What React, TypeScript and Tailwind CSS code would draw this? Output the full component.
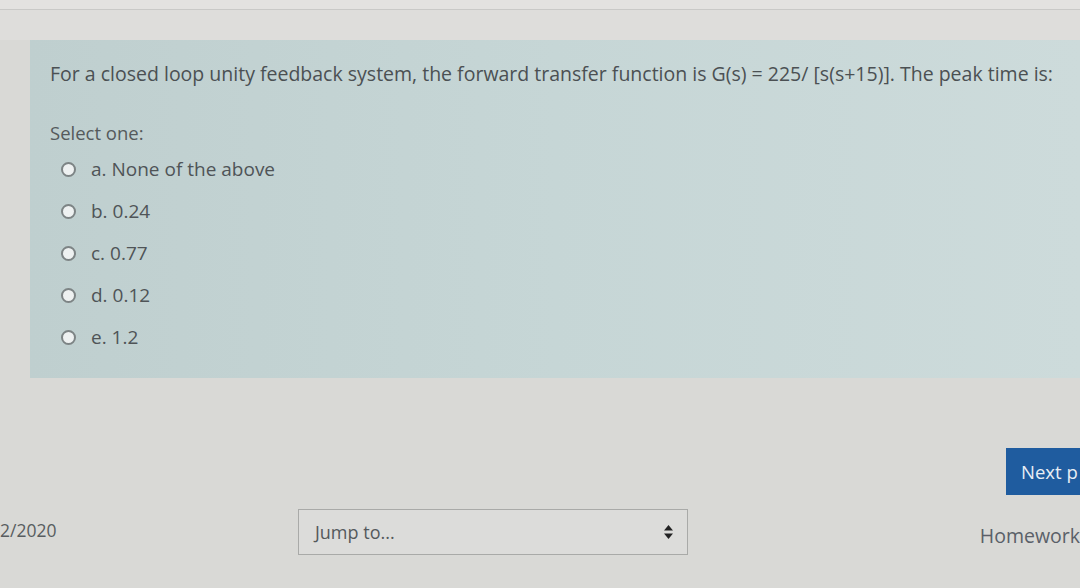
import React from "react";

const options = ["a. None of the above", "b. 0.24", "c. 0.77", "d. 0.12", "e. 1.2"];

function Radio() {
  return <span className="inline-block h-[15px] w-[15px] shrink-0 rounded-full border-[2.5px] border-[#7d8485] bg-[#eef1f1]" />;
}

export default function App() {
  return (
    <div
      className="flex h-[588px] w-[1080px] flex-col overflow-hidden bg-[#d9d9d6] text-[#4a4f52]"
      style={{ fontFamily: '"Open Sans", "Noto Sans", sans-serif' }}
    >
      <div className="h-[10px] border-b border-[#c9c9c7] bg-[#e3e2e0]" />
      <div className="h-[30px] bg-[#dedddb]" />

      <div className="ml-[30px] h-[338px] bg-gradient-to-r from-[#bfcfcf] via-[#c6d6d6] to-[#cddbdb] pl-[20px] pt-[20px]">
        <p className="text-[19.5px] leading-[28px] text-[#4b5053]">
          For a closed loop unity feedback system, the forward transfer function is G(s) = 225/ [s(s+15)]. The peak time is:
        </p>
        <p className="mt-[32px] text-[18.5px] leading-[26px] text-[#555a5c]">Select one:</p>
        <div className="mt-[11px] flex flex-col gap-[17px] pl-[11px]">
          {options.map((o) => (
            <div key={o} className="flex h-[25px] items-center gap-[15px] text-[19px] text-[#4f5457]">
              <Radio />
              <span>{o}</span>
            </div>
          ))}
        </div>
      </div>

      <div className="flex flex-col pt-[70px]">
        <div className="flex justify-end">
          <button className="flex h-[47px] w-[74px] items-center bg-[#1f5c9f] pl-[15px] text-[18.5px] text-[#e8eef5]">
            Next p
          </button>
        </div>
        <div className="mt-[14px] flex items-center justify-between">
          <div className="flex w-[298px] -translate-y-[2px] text-[17.5px] text-[#585d60]">2/2020</div>
          <div className="flex h-[46px] w-[390px] items-center justify-between border border-[#a9aaa8] bg-[#dcdcda] pl-[16px] pr-[14px] text-[18px] text-[#54595c]">
            <span>Jump to...</span>
            <svg width="9" height="14" viewBox="0 0 9 14">
              <path d="M4.5 0 L9 5.5 H0 Z" fill="#222" />
              <path d="M4.5 14 L9 8.5 H0 Z" fill="#222" />
            </svg>
          </div>
          <div className="flex flex-1 translate-y-[4px] justify-end text-[19.5px] text-[#5a6068]">Homework</div>
        </div>
      </div>
    </div>
  );
}
